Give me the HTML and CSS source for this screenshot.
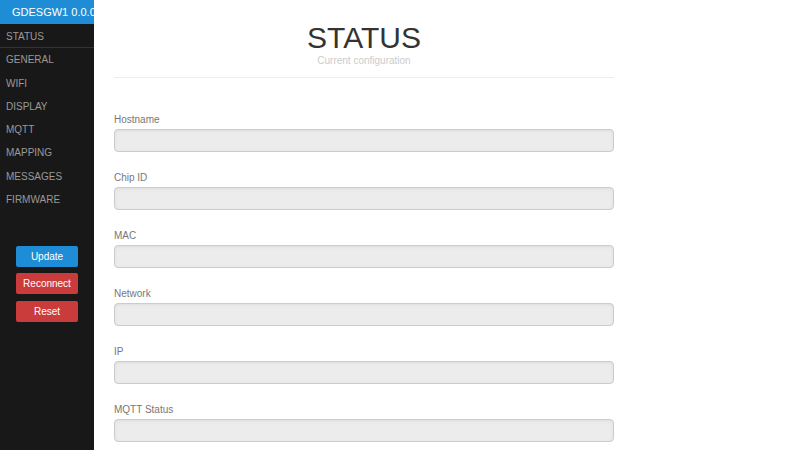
FILE: index.html
```html
<!DOCTYPE html>
<html>
<head>
<meta charset="utf-8">
<link rel="stylesheet" href="styles.css">
</head>
<body>
<div class="layout">
  <nav class="menu">
    <div class="menu-heading">GDESGW1 0.0.0</div>
    <ul class="menu-list">
      <li class="menu-item divided">STATUS</li>
      <li class="menu-item">GENERAL</li>
      <li class="menu-item">WIFI</li>
      <li class="menu-item">DISPLAY</li>
      <li class="menu-item">MQTT</li>
      <li class="menu-item">MAPPING</li>
      <li class="menu-item">MESSAGES</li>
      <li class="menu-item">FIRMWARE</li>
    </ul>
    <div class="menu-buttons">
      <button class="btn btn-primary">Update</button>
      <button class="btn btn-danger">Reconnect</button>
      <button class="btn btn-danger">Reset</button>
    </div>
  </nav>
  <main class="main">
    <div class="header">
      <h1 class="title">STATUS</h1>
      <h2 class="subtitle">Current configuration</h2>
    </div>
    <form class="form">
      <div class="field"><label class="label">Hostname</label><input class="input" type="text" disabled></div>
      <div class="field"><label class="label">Chip ID</label><input class="input" type="text" disabled></div>
      <div class="field"><label class="label">MAC</label><input class="input" type="text" disabled></div>
      <div class="field"><label class="label">Network</label><input class="input" type="text" disabled></div>
      <div class="field"><label class="label">IP</label><input class="input" type="text" disabled></div>
      <div class="field"><label class="label">MQTT Status</label><input class="input" type="text" disabled></div>
    </form>
  </main>
</div>
</body>
</html>
```
FILE: styles.css
```css
html, body {
  margin: 0;
  padding: 0;
  height: 100%;
  overflow: hidden;
}
body {
  font-family: "Liberation Sans", Arial, sans-serif;
  font-size: 10px;
  background: #fff;
  color: #777;
}
.layout {
  display: flex;
  height: 100%;
}
.menu {
  width: 94px;
  flex: none;
  background: #191818;
  height: 100%;
  overflow: hidden;
}
.menu-heading {
  height: 24px;
  line-height: 24px;
  background: #1f8dd6;
  color: #fff;
  font-size: 11px;
  padding-left: 12px;
  white-space: nowrap;
  overflow: hidden;
}
.menu-list {
  list-style: none;
  margin: 0;
  padding: 0;
}
.menu-item {
  color: #999;
  font-size: 10px;
  line-height: 11.3px;
  padding: 6px 6px;
  white-space: nowrap;
}
.menu-item.divided {
  padding-top: 6.5px;
  padding-bottom: 5.5px;
  border-bottom: 1px solid #333;
}
.menu-buttons {
  display: flex;
  flex-direction: column;
  align-items: center;
  gap: 6.5px;
  margin-top: 34.5px;
}
.btn {
  width: 62px;
  height: 21px;
  border: none;
  border-radius: 2px;
  color: #fff;
  font-family: "Liberation Sans", Arial, sans-serif;
  font-size: 10px;
  padding: 0;
  cursor: pointer;
}
.btn-primary {
  background: #1f8dd6;
}
.btn-danger {
  background: #ca3c3c;
}
.main {
  padding-left: 20px;
  width: 500px;
}
.header {
  text-align: center;
  padding-top: 21px;
  padding-bottom: 10px;
  border-bottom: 1px solid #eee;
}
.title {
  margin: 0;
  font-size: 30px;
  line-height: 34px;
  font-weight: normal;
  color: #333;
}
.subtitle {
  margin: 0;
  font-size: 10px;
  line-height: 11.5px;
  font-weight: normal;
  color: #ccc;
}
.form {
  margin-top: 36px;
}
.field {
  margin-bottom: 19.5px;
}
.label {
  display: block;
  font-size: 10px;
  line-height: 11.5px;
  color: #777;
  margin-bottom: 4px;
}
.input {
  display: block;
  box-sizing: border-box;
  width: 500px;
  height: 23px;
  margin: 0;
  background: #ececec;
  border: 1px solid #ccc;
  border-radius: 4px;
  box-shadow: inset 0 1px 3px #ddd;
}
```
